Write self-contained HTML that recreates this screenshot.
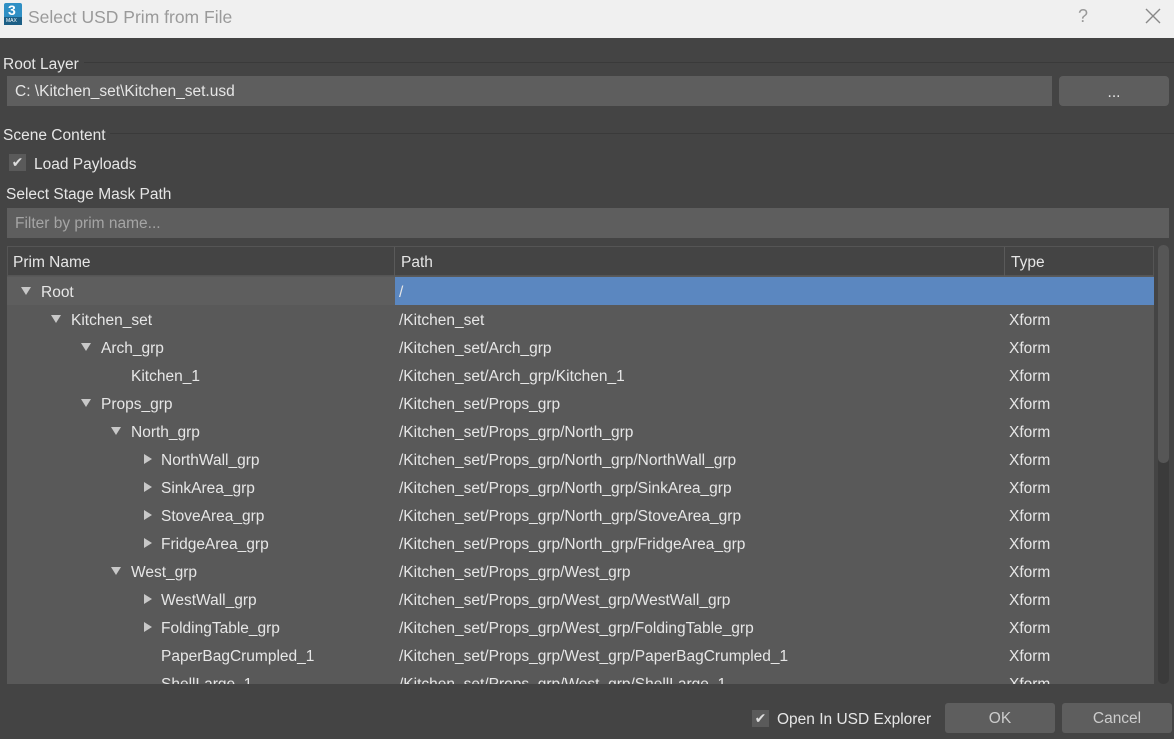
<!DOCTYPE html>
<html><head><style>
*{margin:0;padding:0;box-sizing:border-box}
body{width:1174px;height:739px;background:#444;font-family:"Liberation Sans","DejaVu Sans",sans-serif;font-size:15.5px;color:#e6e6e6;position:relative;overflow:hidden}
.a{position:absolute;white-space:nowrap}
#title{left:0;top:0;width:1174px;height:38px;background:#f0f0f0}
.row{position:absolute;left:7px;width:1147px;height:28px;line-height:28px}
.tri{position:absolute;width:0;height:0}
.down{border-left:5px solid transparent;border-right:5px solid transparent;border-top:8px solid #c8c8c8;top:10px}
.right{border-top:5px solid transparent;border-bottom:5px solid transparent;border-left:8px solid #c8c8c8;top:9px}
.chk{position:absolute;width:17px;height:17px;background:#5a5a5a;color:#ddd;font-size:14px;line-height:17px;text-align:center}
</style></head><body>
<div class="a" id="title">
  <div class="a" style="left:4px;top:3px;width:18px;height:22px;background:#2f8fc4;border-radius:2px"></div>
  <div class="a" style="left:4px;top:17px;width:18px;height:8px;background:#1c5f86"></div>
  <div class="a" style="left:8px;top:2px;color:#fff;font-weight:bold;font-size:14px">3</div>
  <div class="a" style="left:6px;top:18px;color:#fff;font-size:5px">MAX</div>
  <div class="a" style="left:28px;top:7px;color:#9a9a9a;font-size:17.5px">Select USD Prim from File</div>
  <div class="a" style="left:1078px;top:6px;color:#999;font-size:18px">?</div>
  <svg class="a" style="left:1145px;top:8px" width="16" height="16"><path d="M1 1L15 15M15 1L1 15" stroke="#888" stroke-width="1.4"/></svg>
</div>
<div class="a" style="left:3px;top:56px">Root Layer</div>
<div class="a" style="left:84px;top:62px;width:1090px;height:1px;background:#3a3a3a"></div>
<div class="a" style="left:7px;top:76px;width:1045px;height:30px;background:#5e5e5e;line-height:32px;padding-left:8px">C: \Kitchen_set\Kitchen_set.usd</div>
<div class="a" style="left:1059px;top:76px;width:110px;height:30px;background:#5e5e5e;border-radius:4px;text-align:center;line-height:34px">...</div>
<div class="a" style="left:3px;top:127px">Scene Content</div>
<div class="a" style="left:110px;top:133px;width:1064px;height:1px;background:#3a3a3a"></div>
<div class="chk" style="left:9px;top:154px">✔</div>
<div class="a" style="left:34px;top:156px">Load Payloads</div>
<div class="a" style="left:6px;top:186px">Select Stage Mask Path</div>
<div class="a" style="left:7px;top:208px;width:1162px;height:30px;background:#5e5e5e;line-height:32px;padding-left:8px;color:#a5a5a5">Filter by prim name...</div>
<div class="a" style="left:7px;top:246px;width:1147px;height:438px;background:#595959"></div>
<div class="a" style="left:7px;top:246px;width:1147px;height:30px;background:#444;border:1px solid #555"></div>
<div class="a" style="left:394px;top:247px;width:1px;height:29px;background:#5a5a5a"></div>
<div class="a" style="left:1004px;top:247px;width:1px;height:29px;background:#5a5a5a"></div>
<div class="a" style="left:13px;top:254px">Prim Name</div>
<div class="a" style="left:401px;top:254px">Path</div>
<div class="a" style="left:1011px;top:254px">Type</div>
<div class="a" style="left:1158px;top:245px;width:11px;height:439px;background:#3b3b3b;border-radius:5px"></div>
<div class="a" style="left:1158px;top:245px;width:11px;height:218px;background:#565656;border-radius:5px"></div>
<div class="a" style="left:7px;top:277px;width:388px;height:28px;background:#5e5e5e"></div>
<div class="a" style="left:395px;top:277px;width:759px;height:28px;background:#5b87c0"></div>
<div id="rows"></div>
<div class="a" style="left:0;top:684px;width:1174px;height:55px;background:#444"></div>
<div class="chk" style="left:752px;top:710px">✔</div>
<div class="a" style="left:777px;top:711px">Open In USD Explorer</div>
<div class="a" style="left:945px;top:703px;width:110px;height:30px;background:#5e5e5e;border-radius:3px;text-align:center;line-height:32px;color:#ccc">OK</div>
<div class="a" style="left:1062px;top:703px;width:110px;height:30px;background:#5e5e5e;border-radius:3px;text-align:center;line-height:32px;color:#ccc">Cancel</div>
<script>
var d=[[0,'d','Root','/',''],[1,'d','Kitchen_set','/Kitchen_set'],[2,'d','Arch_grp','/Kitchen_set/Arch_grp'],[3,'','Kitchen_1','/Kitchen_set/Arch_grp/Kitchen_1'],[2,'d','Props_grp','/Kitchen_set/Props_grp'],[3,'d','North_grp','/Kitchen_set/Props_grp/North_grp'],[4,'r','NorthWall_grp','/Kitchen_set/Props_grp/North_grp/NorthWall_grp'],[4,'r','SinkArea_grp','/Kitchen_set/Props_grp/North_grp/SinkArea_grp'],[4,'r','StoveArea_grp','/Kitchen_set/Props_grp/North_grp/StoveArea_grp'],[4,'r','FridgeArea_grp','/Kitchen_set/Props_grp/North_grp/FridgeArea_grp'],[3,'d','West_grp','/Kitchen_set/Props_grp/West_grp'],[4,'r','WestWall_grp','/Kitchen_set/Props_grp/West_grp/WestWall_grp'],[4,'r','FoldingTable_grp','/Kitchen_set/Props_grp/West_grp/FoldingTable_grp'],[4,'','PaperBagCrumpled_1','/Kitchen_set/Props_grp/West_grp/PaperBagCrumpled_1'],[4,'','ShellLarge_1','/Kitchen_set/Props_grp/West_grp/ShellLarge_1']];
var h='';d.forEach(function(r,i){var y=277+i*28,x=34+r[0]*30;
var t=r[1]=='d'?'<div class="tri down" style="left:'+(x-20)+'px"></div>':r[1]=='r'?'<div class="tri right" style="left:'+(x-17)+'px"></div>':'';
h+='<div class="row" style="top:'+y+'px">'+t+'<span class="a" style="left:'+x+'px;top:2px">'+r[2]+'</span><span class="a" style="left:392px;top:2px">'+r[3]+'</span><span class="a" style="left:1002px;top:2px">'+(i?'Xform':'')+'</span></div>';});
document.getElementById('rows').innerHTML=h;
</script>
</body></html>
